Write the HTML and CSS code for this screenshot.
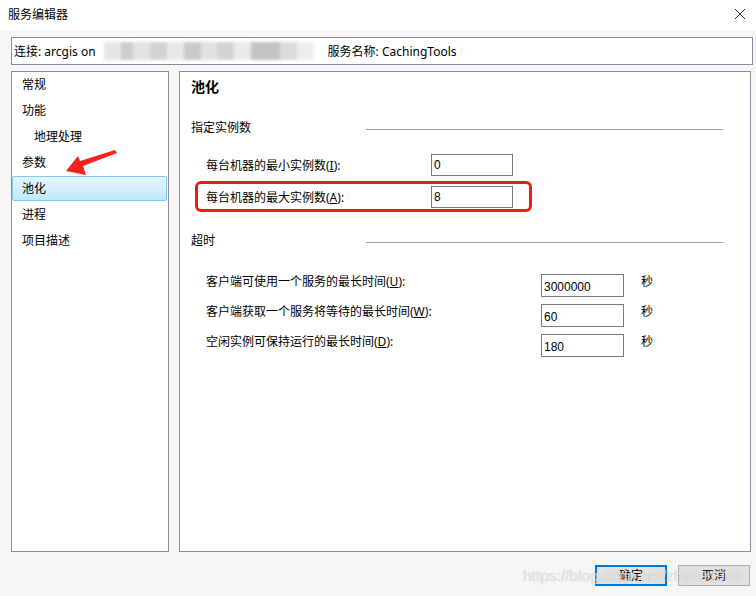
FILE: index.html
```html
<!DOCTYPE html>
<html lang="zh">
<head>
<meta charset="utf-8">
<title>服务编辑器</title>
<link rel="stylesheet" href="styles.css">
</head>
<body>
<div class="window">
  <div class="titlebar">
    <span class="title">服务编辑器</span>
    <svg class="close" width="12" height="12" viewBox="0 0 12 12"><path d="M1 1L11 11M11 1L1 11" stroke="#222" stroke-width="1"/></svg>
  </div>
  <div class="body">
    <div class="conn">
      <span>连接: arcgis on</span>
      <span class="blur"></span>
      <span>服务名称: CachingTools</span>
    </div>
    <div class="content">
      <ul class="nav">
        <li>常规</li>
        <li>功能</li>
        <li class="sub">地理处理</li>
        <li>参数</li>
        <li class="selected">池化</li>
        <li>进程</li>
        <li>项目描述</li>
      </ul>
      <div class="pane">
        <div class="pane-title">池化</div>
        <div class="group-head g1"><span class="group-label">指定实例数</span><span class="rule"></span></div>
        <div class="row r1">
          <span class="label">每台机器的最小实例数(<u>I</u>):</span>
          <span class="input w1">0</span>
        </div>
        <div class="row r2">
          <span class="highlight"></span>
          <span class="label">每台机器的最大实例数(<u>A</u>):</span>
          <span class="input w1">8</span>
        </div>
        <div class="group-head g2"><span class="group-label">超时</span><span class="rule"></span></div>
        <div class="row t1">
          <span class="label label2">客户端可使用一个服务的最长时间(<u>U</u>):</span>
          <span class="input w2">3000000</span>
          <span class="unit">秒</span>
        </div>
        <div class="row t2">
          <span class="label label2">客户端获取一个服务将等待的最长时间(<u>W</u>):</span>
          <span class="input w2">60</span>
          <span class="unit">秒</span>
        </div>
        <div class="row t2">
          <span class="label label2">空闲实例可保持运行的最长时间(<u>D</u>):</span>
          <span class="input w2">180</span>
          <span class="unit">秒</span>
        </div>
      </div>
    </div>
    <div class="footer">
      <span class="btn primary">确定</span>
      <span class="btn">取消</span>
    </div>
  </div>
  <svg class="arrow" width="62" height="32" viewBox="58 146 62 32">
    <polygon points="66,171 78,156 80,161 115,150 117,153 83,166 86,175" fill="#f2231b"/>
  </svg>
  <div class="watermark">https://blog.csdn.net/zhy191996</div>
</div>
</body>
</html>
```
FILE: styles.css
```css
* { box-sizing: border-box; }
html, body { margin: 0; padding: 0; }
body {
  width: 756px;
  height: 596px;
  overflow: hidden;
  font-family: "Noto Sans", "Noto Sans CJK SC", sans-serif;
  font-size: 12px;
  color: #000;
  background: #f6f6f6;
}
.window { position: relative; width: 756px; height: 596px; }
.titlebar {
  height: 30px;
  background: #fff;
  display: flex;
  align-items: center;
  justify-content: space-between;
  padding: 0 10px 2px 8px;
}
.title { font-size: 12px; }
.body { padding: 7px 3px 0 11px; }
.conn {
  height: 28px;
  background: #fff;
  border: 1px solid #8a8c9e;
  display: flex;
  align-items: center;
  padding-left: 2px;
}
.blur {
  width: 210px;
  height: 18px;
  margin: 0 14px 0 8px;
  background:
    linear-gradient(90deg, #e4e4e4 0 8%, #c8c8c8 8% 14%, #e0e0e0 14% 22%, #cfcfcf 22% 30%, #e6e6e6 30% 38%, #c4c4c4 38% 46%, #dedede 46% 54%, #d0d0d0 54% 62%, #e8e8e8 62% 70%, #bdbdbd 70% 84%, #d8d8d8 84% 92%, #ececec 92%);
  filter: blur(1.5px);
  opacity: 0.9;
}
.content {
  display: flex;
  gap: 10px;
  margin-top: 6px;
  height: 481px;
  padding-right: 2px;
}
.nav {
  list-style: none;
  margin: 0;
  padding: 0;
  width: 158px;
  background: #fff;
  border: 1px solid #8a8c9e;
}
.nav li {
  height: 26px;
  line-height: 26px;
  padding-left: 10px;
}
.nav li.sub { padding-left: 22px; }
.nav li.selected {
  height: 25px;
  line-height: 23px;
  margin: 0 1px 1px 0;
  padding-left: 9px;
  border: 1px solid #84c7f0;
  border-radius: 2px;
  background: linear-gradient(#e6f6fe, #bfe8fb);
}
.pane {
  flex: 1;
  background: #fff;
  border: 1px solid #8a8c9e;
  padding-left: 11px;
}
.pane-title {
  margin-top: 6px;
  height: 18px;
  line-height: 18px;
  font-size: 14px;
  font-weight: bold;
}
.group-head {
  display: flex;
  align-items: center;
  height: 16px;
  line-height: 16px;
}
.g1 { margin-top: 24px; }
.g2 { margin-top: 25px; }
.group-label { width: 175px; }
.rule {
  flex: 1;
  border-top: 1px solid #a0a0a0;
  margin: 2px 27px 0 0;
}
.row {
  position: relative;
  display: flex;
  align-items: center;
  padding-left: 15px;
}
.r1 { margin-top: 18px; height: 22px; }
.r2 { margin-top: 10px; height: 22px; }
.t1 { margin-top: 25px; height: 23px; align-items: flex-start; }
.t2 { margin-top: 7px; height: 23px; align-items: flex-start; }
.label { width: 225px; }
.label2 { width: 335px; line-height: 16px; }
.input {
  display: block;
  background: #fff;
  border: 1px solid #7a7a7a;
  padding-left: 2px;
  font-family: "Liberation Sans", sans-serif;
  font-size: 12px;
}
.w1 { width: 82px; height: 22px; line-height: 20px; }
.w2 { width: 83px; height: 23px; line-height: 22px; padding-top: 1px; }
.unit { margin-left: 17px; line-height: 16px; }
.highlight {
  position: absolute;
  left: 4px;
  top: -5px;
  width: 337px;
  height: 31px;
  border: 3px solid #f01c14;
  border-radius: 6px;
}
.footer {
  display: flex;
  justify-content: flex-end;
  gap: 11px;
  margin-top: 13px;
  padding-right: 3px;
}
.btn {
  width: 72px;
  height: 21px;
  line-height: 19px;
  text-align: center;
  background: #e1e1e1;
  border: 1px solid #adadad;
}
.btn.primary { border: 2px solid #0078d7; line-height: 17px; }
.arrow { position: absolute; left: 58px; top: 146px; }
.watermark {
  position: absolute;
  left: 523px;
  top: 567px;
  font-family: "Liberation Sans", sans-serif;
  font-size: 15.5px;
  color: rgba(255,255,255,0.7);
  text-shadow: 0 0 1px rgba(140,140,140,0.7);
  pointer-events: none;
  white-space: nowrap;
}
```
